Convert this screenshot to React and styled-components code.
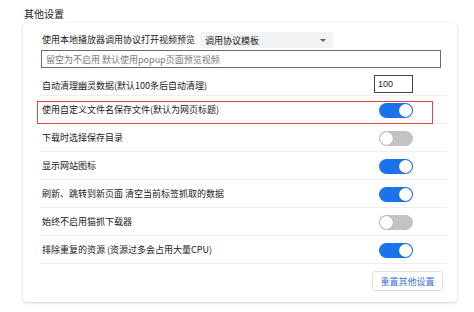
import React from "react";
import styled, { createGlobalStyle } from "styled-components";

const Global = createGlobalStyle`
  html, body { margin: 0; padding: 0; background: #fff; }
  body {
    width: 474px;
    height: 312px;
    overflow: hidden;
    font-family: "Noto Sans CJK SC", "Noto Sans", sans-serif;
    color: #202124;
  }
`;

const Title = styled.div`
  padding: 8px 0 0 24px;
  font-size: 10px;
  line-height: 12px;
  height: 12px;
  color: #202124;
`;

const Card = styled.div`
  margin: 3px 17px 0 23px;
  padding: 9px 10px 11px 17px;
  background: #fff;
  border-radius: 4px;
  box-shadow: 0 1px 3px rgba(0, 0, 0, 0.18), 0 0 1px rgba(0, 0, 0, 0.08);
  box-sizing: border-box;
`;

const TopRow = styled.div`
  display: flex;
  align-items: center;
  height: 16px;
  padding-left: 2px;
`;

const Label = styled.span`
  font-size: 9px;
  line-height: 14px;
  white-space: nowrap;
  color: #202124;
`;

const Select = styled.div`
  margin-left: 5px;
  width: 133px;
  height: 16px;
  background: #f1f3f4;
  border-radius: 2px;
  display: flex;
  align-items: center;
  justify-content: space-between;
  padding: 0 5px 0 5px;
  box-sizing: border-box;
  font-size: 9px;
  color: #202124;
`;

const Arrow = styled.span`
  width: 0;
  height: 0;
  border-left: 3px solid transparent;
  border-right: 3px solid transparent;
  border-top: 3px solid #5f6368;
  margin-right: 2px;
`;

const TextInput = styled.input`
  display: block;
  margin: 2px 0 0 1px;
  width: 400px;
  height: 18px;
  box-sizing: border-box;
  border: 1px solid #6b6b6b;
  border-radius: 0;
  padding: 0 4px;
  font-family: inherit;
  font-size: 9px;
  outline: none;
  &::placeholder { color: #7a7a7a; }
`;

const Row = styled.div`
  position: relative;
  display: flex;
  align-items: ${(p) => (p.$low ? "flex-start" : "center")};
  justify-content: space-between;
  height: 28px;
  box-sizing: border-box;
  padding: ${(p) => (p.$low ? "7px 0 0 2px" : "1px 0 0 2px")};
  border-bottom: 1px solid #eceef0;
`;

const LowLabel = styled(Label)`
  align-self: flex-end;
  margin-bottom: 2px;
`;

const NumInput = styled.input`
  width: 39px;
  height: 18px;
  box-sizing: border-box;
  border: 1px solid #444;
  border-radius: 0;
  padding: 0 3px;
  margin-right: 34px;
  font-family: "Liberation Sans", Arial, sans-serif;
  font-size: 9px;
  color: #202124;
  outline: none;
`;

const Track = styled.span`
  position: relative;
  display: inline-block;
  width: 34px;
  height: 15px;
  border-radius: 8px;
  margin-right: 34px;
  background: ${(p) => (p.$on ? "#1a73e8" : "#c1c3c6")};
  flex: none;
`;

const Knob = styled.span`
  position: absolute;
  top: 1px;
  ${(p) => (p.$on ? "right: 1px;" : "left: 1px;")}
  width: 13px;
  height: 13px;
  border-radius: 50%;
  background: #fff;
  box-shadow: 0 0 1px rgba(0, 0, 0, 0.3);
`;

const Highlight = styled.span`
  position: absolute;
  left: -3px;
  right: 14px;
  top: 5px;
  bottom: -1px;
  border: 1px solid #e0474c;
  pointer-events: none;
`;

const Footer = styled.div`
  display: flex;
  justify-content: flex-end;
  padding: 7px 4px 0 0;
`;

const Button = styled.button`
  height: 20px;
  width: 71px;
  padding: 0;
  background: #fff;
  border: 1px solid #dfe1e5;
  border-radius: 3px;
  font-family: inherit;
  font-size: 9px;
  color: #3b73d9;
`;

const Toggle = ({ on }) => (
  <Track $on={on}>
    <Knob $on={on} />
  </Track>
);

const toggles = [
  { label: "使用自定义文件名保存文件(默认为网页标题)", on: true, hl: true },
  { label: "下载时选择保存目录", on: false },
  { label: "显示网站图标", on: true },
  { label: "刷新、跳转到新页面 清空当前标签抓取的数据", on: true },
  { label: "始终不启用猫抓下载器", on: false },
  { label: "排除重复的资源 (资源过多会占用大量CPU)", on: true },
];

export default function App() {
  return (
    <>
      <Global />
      <Title>其他设置</Title>
      <Card>
        <TopRow>
          <Label>使用本地播放器调用协议打开视频预览</Label>
          <Select>
            <span>调用协议模板</span>
            <Arrow />
          </Select>
        </TopRow>
        <TextInput placeholder="留空为不启用 默认使用popup页面预览视频" />
        <Row $low>
          <LowLabel>自动清理幽灵数据(默认100条后自动清理)</LowLabel>
          <NumInput defaultValue="100" />
        </Row>
        {toggles.map((t) => (
          <Row key={t.label}>
            <Label>{t.label}</Label>
            <Toggle on={t.on} />
            {t.hl && <Highlight />}
          </Row>
        ))}
        <Footer>
          <Button>重置其他设置</Button>
        </Footer>
      </Card>
    </>
  );
}
